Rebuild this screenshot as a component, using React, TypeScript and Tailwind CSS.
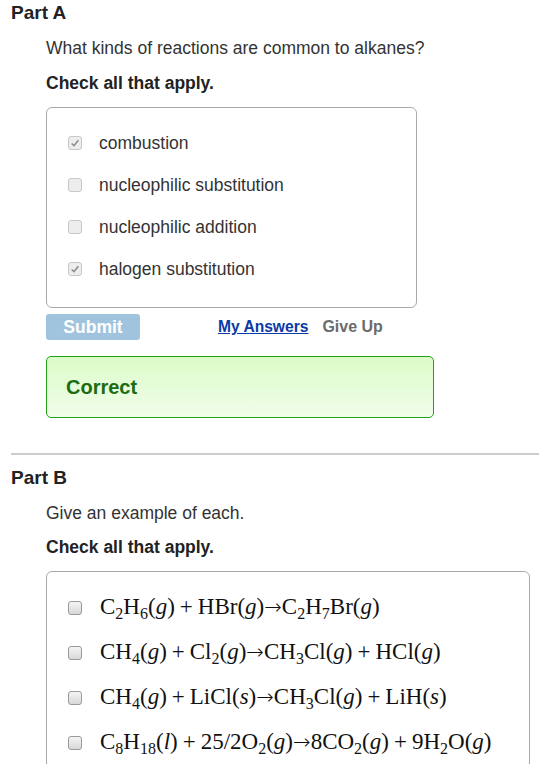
import React from 'react';

function Box({ checked, dim }: { checked?: boolean; dim?: boolean }) {
  return (
    <span
      className={`inline-flex h-[14px] w-[14px] shrink-0 items-center justify-center rounded-[3px] border ${
        dim ? 'border-[#c8c8c8] bg-[#ededed]' : 'border-[#9a9a9a] bg-gradient-to-b from-[#f4f4f4] to-[#d8d8d8]'
      }`}
    >
      {checked && (
        <svg viewBox="0 0 12 12" className="h-[10px] w-[10px]">
          <path d="M2 6.5 L4.8 9.2 L10 2.6" fill="none" stroke="#8a8a8a" strokeWidth="1.8" />
        </svg>
      )}
    </span>
  );
}

const Sub = ({ children }: { children: React.ReactNode }) => (
  <span className="relative top-[5px] text-[16px]">{children}</span>
);
const I = ({ children }: { children: React.ReactNode }) => <i>{children}</i>;
const Plus = () => <span className="mx-[5px]">+</span>;
const Arrow = () => (
  <span className="font-['DejaVu_Sans',sans-serif] text-[21px] font-light">→</span>
);

const optionsA = [
  { label: 'combustion', checked: true },
  { label: 'nucleophilic substitution', checked: false },
  { label: 'nucleophilic addition', checked: false },
  { label: 'halogen substitution', checked: true },
];

const equations: React.ReactNode[] = [
  <>
    C<Sub>2</Sub>H<Sub>6</Sub>(<I>g</I>)<Plus />HBr(<I>g</I>)<Arrow />C<Sub>2</Sub>H<Sub>7</Sub>Br(<I>g</I>)
  </>,
  <>
    CH<Sub>4</Sub>(<I>g</I>)<Plus />Cl<Sub>2</Sub>(<I>g</I>)<Arrow />CH<Sub>3</Sub>Cl(<I>g</I>)<Plus />HCl(<I>g</I>)
  </>,
  <>
    CH<Sub>4</Sub>(<I>g</I>)<Plus />LiCl(<I>s</I>)<Arrow />CH<Sub>3</Sub>Cl(<I>g</I>)<Plus />LiH(<I>s</I>)
  </>,
  <>
    C<Sub>8</Sub>H<Sub>18</Sub>(<I>l</I>)<Plus />25/2O<Sub>2</Sub>(<I>g</I>)<Arrow />8CO<Sub>2</Sub>(<I>g</I>)<Plus />9H<Sub>2</Sub>O(<I>g</I>)
  </>,
];

export default function App() {
  return (
    <div className="w-[539px] h-[764px] overflow-hidden bg-white font-['Liberation_Sans',Arial,sans-serif] text-[17.5px] text-[#333]">
      {/* Part A */}
      <h2 className="pl-[11px] text-[19px] font-bold leading-[26px] text-[#222]">Part A</h2>
      <div className="pl-[46px]">
        <p className="mt-[10px] leading-[24px]">What kinds of reactions are common to alkanes?</p>
        <p className="mt-[11px] font-bold leading-[24px] text-[#222]">Check all that apply.</p>
        <div className="mt-[12px] w-[371px] rounded-[6px] border border-[#aaa] pt-[14px] pb-[17px] pl-[21px]">
          {optionsA.map((o) => (
            <label key={o.label} className="flex h-[42px] items-center gap-[17px]">
              <Box checked={o.checked} dim />
              <span>{o.label}</span>
            </label>
          ))}
        </div>
        <div className="mt-[6px] flex items-center">
          <button className="h-[26px] w-[94px] rounded-[3px] bg-[#a0c4de] text-[17.5px] font-bold leading-[26px] text-white">
            Submit
          </button>
          <a className="ml-[78px] text-[15.6px] font-bold text-[#0b3aa5] underline">My Answers</a>
          <span className="ml-[14px] text-[16px] font-bold text-[#6b6b6b]">Give Up</span>
        </div>
        <div className="mt-[16px] flex h-[62px] w-[388px] items-center rounded-[5px] border border-[#22a01a] bg-gradient-to-b from-[#dbfcc8] to-[#f1fdea] pl-[19px]">
          <span className="text-[20px] font-bold text-[#1d6b12]">Correct</span>
        </div>
      </div>

      <hr className="ml-[11px] mt-[35px] border-t-2 border-[#cccccc]" />

      {/* Part B */}
      <h2 className="mt-[10px] pl-[11px] text-[19px] font-bold leading-[26px] text-[#222]">Part B</h2>
      <div className="pl-[46px]">
        <p className="mt-[10px] leading-[24px]">Give an example of each.</p>
        <p className="mt-[10px] font-bold leading-[24px] text-[#222]">Check all that apply.</p>
        <div className="mt-[12px] w-[484px] rounded-[6px] border border-[#aaa] pt-[13px] pb-[17px] pl-[21px]">
          {equations.map((eq, i) => (
            <label key={i} className="flex h-[45px] items-center gap-[18px]">
              <Box />
              <span className="font-['Liberation_Serif','Times_New_Roman',serif] text-[23px] leading-[30px] text-[#111] whitespace-nowrap">
                {eq}
              </span>
            </label>
          ))}
        </div>
      </div>
    </div>
  );
}
